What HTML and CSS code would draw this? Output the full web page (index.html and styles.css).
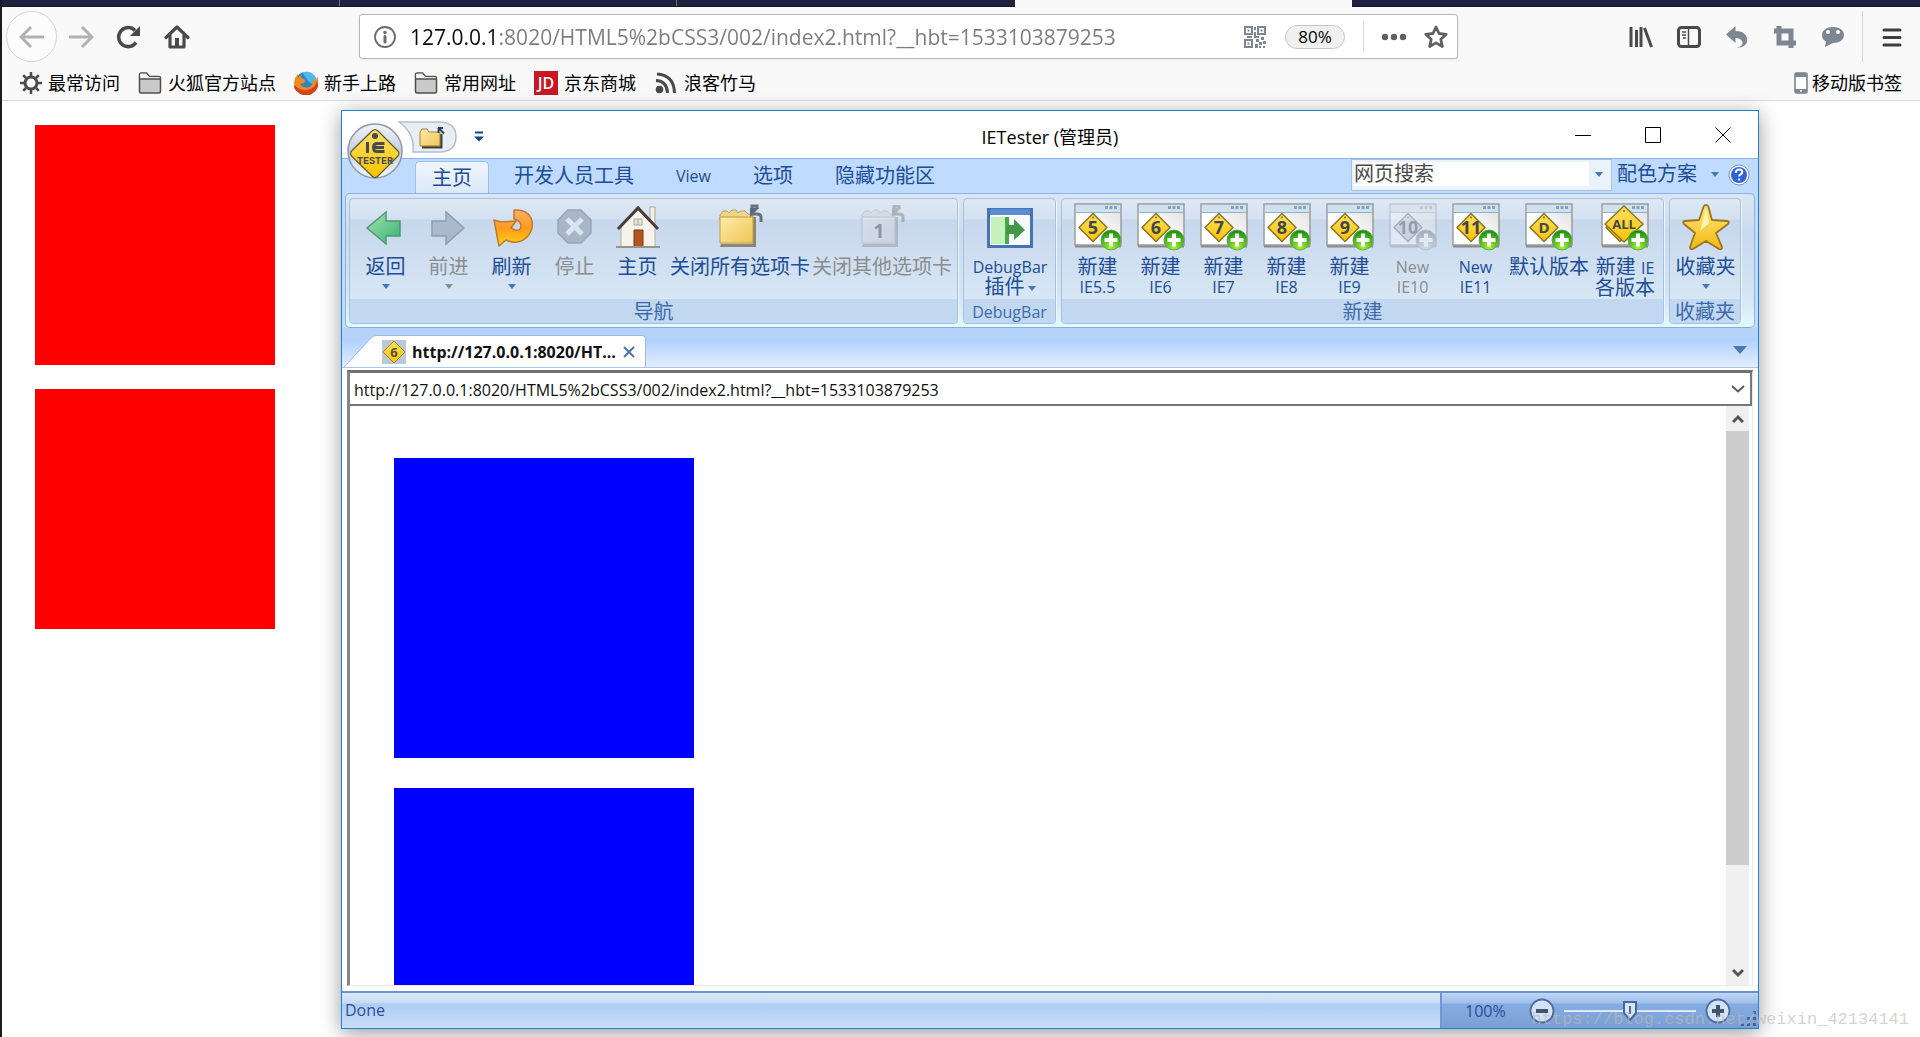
FILE: index.html
```html
<!DOCTYPE html>
<html lang="zh-CN">
<head>
  <meta charset="UTF-8">
  <meta name="viewport" content="width=device-width, initial-scale=1.0">
  <title>index2.html</title>
  <link rel="stylesheet" href="styles.css">
</head>
<body>
  <!-- shared icons -->
  <svg class="defs" width="0" height="0" aria-hidden="true">
    <defs>
      <linearGradient id="gold" x1="0" y1="0" x2="0" y2="1">
        <stop offset="0" stop-color="#ffe682"/><stop offset="1" stop-color="#f2b90d"/>
      </linearGradient>
      <linearGradient id="yellow" x1="0" y1="0" x2="0" y2="1">
        <stop offset="0" stop-color="#ffe066"/><stop offset="1" stop-color="#f9c300"/>
      </linearGradient>
      <linearGradient id="folderFill" x1="0" y1="0" x2="1" y2="1">
        <stop offset="0" stop-color="#fdebac"/><stop offset="1" stop-color="#eec552"/>
      </linearGradient>
      <linearGradient id="page" x1="1" y1="0" x2="0" y2="1">
        <stop offset="0" stop-color="#dcdcdc"/><stop offset="0.6" stop-color="#ffffff"/>
      </linearGradient>
      <linearGradient id="orange" x1="0" y1="0" x2="0" y2="1">
        <stop offset="0" stop-color="#f7b26a"/><stop offset="0.5" stop-color="#ff9a1c"/><stop offset="1" stop-color="#ffd21a"/>
      </linearGradient>
      <linearGradient id="green" x1="0" y1="0" x2="1" y2="1">
        <stop offset="0" stop-color="#a5e6b4"/><stop offset="1" stop-color="#35b06c"/>
      </linearGradient>
      <radialGradient id="plusFill" cx="0.5" cy="0.85" r="0.8">
        <stop offset="0" stop-color="#a6f52c"/><stop offset="1" stop-color="#169012"/>
      </radialGradient>
      <linearGradient id="orbFill" x1="0" y1="0" x2="0" y2="1">
        <stop offset="0" stop-color="#f3f6fa"/><stop offset="0.5" stop-color="#c5cedb"/><stop offset="1" stop-color="#f4f6f9"/>
      </linearGradient>
    </defs>
    <symbol id="folder" viewBox="0 0 24 22">
      <path d="M1.500 19.500V2.500Q1.500 1 3 1h5.500l3 3.500H21q1.500 0 1.500 1.500v13.500q0 1.500-1.500 1.500H3q-1.500 0-1.500-1.500z" fill="#c9c9c9" stroke="#4f4f4f" stroke-width="1.500"/>
      <path d="M2.200 6.500V1.800h6l3 3.500h10.500v1.200z" fill="#f4f4f4"/>
      <path d="M1.500 7h21" stroke="#4f4f4f" stroke-width="1.500"/>
    </symbol>
    <symbol id="ieWindow" viewBox="0 0 48 48">
      <path d="M1 1h46v41H1z" fill="url(#page)" stroke="#9a9c9e" stroke-width="1.500"/>
      <path d="M2 2h44v7H2z" fill="#cfe0ee"/>
      <path d="M1 9.500h46" stroke="#8fb3cf"/>
      <path d="M31 4.500h3m1.500 0h3m1.500 0h3" stroke="#7fa3c4" stroke-width="3"/>
      <path d="M1 43.500h46" stroke="#8a8a8a" stroke-width="2"/>
      <path d="M19 10.500 33 24.500 19 38.500 5 24.500z" fill="url(#yellow)" stroke="#8a7420" stroke-width="1.500" stroke-linejoin="round"/>
      <circle cx="19" cy="14.500" r="1" fill="#7b6820"/>
    </symbol>
    <symbol id="plus" viewBox="0 0 48 48">
      <circle cx="37" cy="37" r="10" fill="url(#plusFill)" stroke="#67a857"/>
      <path d="M37 30.500v13M30.500 37h13" stroke="#fff" stroke-width="4"/>
    </symbol>
    <symbol id="folders" viewBox="0 0 48 44">
      <path d="M5 39h32V12h3v30H4z" fill="#8d8674"/>
      <path d="M4 10l3-4h4l2 2 3-3h4l2 3 3-2h4l3 3 5 1v5H4z" fill="#f0d48c" stroke="#c2a35c"/>
      <path d="M4 12h33v26H4z" fill="url(#folderFill)" stroke="#c39b3f"/>
      <path d="M45 17v-5q0-3-4-3h-5V1h5v3" fill="none" stroke="#6b7075" stroke-width="3"/>
      <path d="M34 3h9l-9 9z" fill="#5d6a7c"/>
    </symbol>
  </svg>

  <div class="browser">
    <div class="tab-strip">
      <div class="tab"></div>
      <div class="tab"></div>
      <div class="tab"></div>
      <div class="tab active"></div>
    </div>

    <nav class="toolbar">
      <button class="back" aria-label="后退">
        <svg width="26" height="24" viewBox="0 0 26 24"><path d="M25 12H3M12 2 2 12l10 10" fill="none" stroke="#b1b1b1" stroke-width="3"/></svg>
      </button>
      <button class="tool" aria-label="前进">
        <svg width="26" height="24" viewBox="0 0 26 24"><path d="M1 12h22M14 2l10 10-10 10" fill="none" stroke="#b1b1b1" stroke-width="3"/></svg>
      </button>
      <button class="tool" aria-label="重新载入">
        <svg width="26" height="24" viewBox="0 0 26 24"><path d="M20 17.500A9.500 9.500 0 1 1 19 5.500" fill="none" stroke="#4a4a4a" stroke-width="3.500"/><path d="M24 1v10H14z" fill="#4a4a4a"/></svg>
      </button>
      <button class="tool" aria-label="主页">
        <svg width="26" height="26" viewBox="0 0 26 26"><path d="M2 13.500 13 3l11 10.500" fill="none" stroke="#4a4a4a" stroke-width="3.200" stroke-linecap="round" stroke-linejoin="round"/><path d="M6 11v12h14V11" fill="none" stroke="#4a4a4a" stroke-width="3.200" stroke-linejoin="round"/><path d="M11 14h4v10h-4z" fill="#4a4a4a"/></svg>
      </button>

      <div class="url-bar">
        <svg width="22" height="22" viewBox="0 0 22 22"><circle cx="11" cy="11" r="10" fill="none" stroke="#6b6b6b" stroke-width="1.800"/><circle cx="11" cy="6.500" r="1.700" fill="#6b6b6b"/><path d="M11 10.500v5.500" stroke="#6b6b6b" stroke-width="3" stroke-linecap="round"/></svg>
        <input class="url" type="text" aria-label="地址" value="127.0.0.1:8020/HTML5%2bCSS3/002/index2.html?__hbt=1533103879253">
        <button class="plain" aria-label="二维码">
          <svg width="22" height="22" viewBox="0 0 22 22" fill="#7d8794"><path fill-rule="evenodd" d="M0 0h9v9H0zM2 2v5h5V2zM13 0h9v9h-9zM15 2v5h5V2zM0 13h9v9H0zM2 15v5h5v-5z"/><path d="M3.500 3.500h2v2h-2zM16.500 3.500h2v2h-2zM3.500 16.500h2v2h-2zM10 1h2v3h-2zM10 6h2v4h3v2h-5zM3 10h5v2H3zM12 13h3v3h-3zM17 11h3v3h-3zM15 16h3v3h-3zM19 15h3v3h-3zM11 18h3v4h-3zM19 20h2v2h-2zM15 20h2v2h-2z"/></svg>
        </button>
        <button class="zoom-level">80%</button>
        <span class="url-divider"></span>
        <button class="plain" aria-label="页面操作">
          <svg width="26" height="8" viewBox="0 0 26 8" fill="#606060"><circle cx="4" cy="4" r="3.200"/><circle cx="13" cy="4" r="3.200"/><circle cx="22" cy="4" r="3.200"/></svg>
        </button>
        <button class="plain star" aria-label="加入书签">
          <svg width="24" height="24" viewBox="0 0 24 24"><path d="M12 2l3 6.500 7.200.8-5.400 4.900 1.500 7.300-6.300-3.600-6.300 3.600 1.500-7.300L1.800 9.300 9 8.500z" fill="none" stroke="#606060" stroke-width="2.800" stroke-linejoin="round"/></svg>
        </button>
      </div>

      <div class="actions">
        <button class="tool" aria-label="我的足迹">
          <svg width="24" height="22" viewBox="0 0 24 22" stroke="#4a4a4a" stroke-width="3"><path d="M2 1v20M7.500 4v17M12 1v20M15.500 2l7 19"/></svg>
        </button>
        <button class="tool" aria-label="侧栏">
          <svg width="24" height="22" viewBox="0 0 24 22"><rect x="1.500" y="1.500" width="21" height="19" rx="3" fill="none" stroke="#4a4a4a" stroke-width="3"/><path d="M11.500 2v18M5 6h4M5 9h4M6 12h3" stroke="#4a4a4a" stroke-width="1.500"/></svg>
        </button>
        <button class="tool" aria-label="撤销">
          <svg width="24" height="22" viewBox="0 0 24 22"><path d="M1 8.500 10.500 0v5C19 5 23 10 22 15.500 21 20 16 22 12 21.500c5-1 6.500-4 5-6.500-1.300-2-3.500-3-6.500-3v5z" fill="#7d8794"/></svg>
        </button>
        <button class="tool" aria-label="截图">
          <svg width="24" height="22" viewBox="0 0 24 22"><path d="M1 5h17v17M6 0v17h17" fill="none" stroke="#7d8794" stroke-width="5"/></svg>
        </button>
        <button class="tool" aria-label="消息">
          <svg width="24" height="22" viewBox="0 0 24 22"><path d="M12 1c6.500 0 11 3.500 11 8s-4.500 8-11 8L4 21l1-5.500C2 14 1 11.500 1 9c0-4.500 4.500-8 11-8z" fill="#7d8794"/><circle cx="7" cy="6" r="2" fill="#fff"/><circle cx="17" cy="6" r="2" fill="#fff"/></svg>
        </button>
        <span class="divider"></span>
        <button class="tool menu" aria-label="打开菜单">
          <svg width="20" height="20" viewBox="0 0 20 20"><path d="M2 3h16M2 10.500h16M2 18h16" stroke="#3e3e3e" stroke-width="3" stroke-linecap="round"/></svg>
        </button>
      </div>
    </nav>

    <div class="bookmarks">
      <a href="#"><svg width="22" height="22" viewBox="0 0 22 22"><circle cx="11" cy="11" r="6" fill="none" stroke="#4a4a4a" stroke-width="3"/><path d="M11 0v4M11 18v4M0 11h4M18 11h4M3.200 3.200 6 6M16 16l2.800 2.800M3.200 18.800 6 16M16 6l2.800-2.800" stroke="#4a4a4a" stroke-width="2.500"/></svg>最常访问</a>
      <a href="#"><svg width="24" height="22"><use href="#folder"/></svg>火狐官方站点</a>
      <a href="#"><svg width="24" height="24" viewBox="0 0 24 24"><circle cx="12" cy="12" r="11" fill="#2c83c6"/><path d="M8 1.500Q15-1 20 4t2 11l-7-4z" fill="#4db8ea"/><path d="M1 7l3-4v3l4-2-1 3 5 2-2 3-4 1q4 5 9 3t5-9l3 3V5q4 8-1 14t-12 5Q0 22 0 12z" fill="#ef8a1d"/><path d="M1 14q4 6 12 5t10-9q3 7-4 12t-14 0-4-8z" fill="#d8431f"/></svg>新手上路</a>
      <a href="#"><svg width="24" height="22"><use href="#folder"/></svg>常用网址</a>
      <a href="#"><span class="jd">JD</span>京东商城</a>
      <a href="#"><svg width="24" height="22" viewBox="0 0 24 22"><circle cx="5.500" cy="17.500" r="3.800" fill="#4a4a4a"/><path d="M2 8.500Q13 9 13.500 21M3 2Q20 3 20.500 21" fill="none" stroke="#4a4a4a" stroke-width="3"/></svg>浪客竹马</a>
      <a class="mobile" href="#"><svg width="14" height="22" viewBox="0 0 14 22"><rect x="1" y="1" width="12" height="20" rx="2" fill="#fff" stroke="#939ba5" stroke-width="2"/><path d="M1 1h12v4H1zM1 17h12v4H1z" fill="#7d8794"/><circle cx="7" cy="19" r="1" fill="#fff"/></svg>移动版书签</a>
    </div>

    <main class="page">
      <div class="red-box"></div>
      <div class="red-box"></div>
    </main>
  </div>

  <!-- IETester window -->
  <section class="window">
    <header class="title-bar">
      <div class="quick-access">
        <button aria-label="关闭选项卡">
          <svg width="60" height="32" viewBox="0 0 60 32"><path d="M1 1h42q15 1 15 15T43 31H15Q17 12 1 1z" fill="#e9eef4" stroke="#b3bfce" stroke-width="1.500"/><path d="M24 26h19V13" stroke="#41423f" stroke-width="3" fill="none"/><path d="M22 11l2-3h5l2 3h11v14H22z" fill="url(#folderFill)" stroke="#a5813b"/><path d="M40 7h5M40.500 7v5M41 7.500l5 5" stroke="#2a3c5e" stroke-width="1.800"/></svg>
        </button>
        <button aria-label="自定义">
          <svg width="10" height="12" viewBox="0 0 10 12"><path d="M1 1.500h8" stroke="#15428b" stroke-width="2"/><path d="M0 5.500h10l-5 5z" fill="#15428b"/></svg>
        </button>
      </div>
      <h1>IETester (管理员)</h1>
      <div class="window-buttons">
        <button aria-label="最小化"><svg width="16" height="16" viewBox="0 0 16 16"><path d="M0 8.500h16" stroke="#000"/></svg></button>
        <button aria-label="最大化"><svg width="16" height="16" viewBox="0 0 16 16"><path d="M.5.5h15v15H.5z" fill="none" stroke="#000"/></svg></button>
        <button aria-label="关闭"><svg width="16" height="16" viewBox="0 0 16 16"><path d="M.5.5l15 15M15.500.5l-15 15" stroke="#000"/></svg></button>
      </div>
    </header>

    <button class="orb" aria-label="IETester">
      <svg width="58" height="58" viewBox="0 0 58 58">
        <circle cx="29" cy="29" r="27" fill="url(#orbFill)" stroke="#8b98ad" stroke-width="1.500"/>
        <path d="M26 9q3-3 6 0L51.500 28.500q3 3 0 6L32 54q-3 3-6 0L6 34.500q-3-3 0-6z" fill="url(#yellow)" stroke="#5d5a3a" stroke-width="1.200"/>
        <path d="M26 14h6M29 11v6" stroke="#444c55" stroke-width="3.500"/>
        <path d="M21.500 20v11M38.500 21.500H31q-3.500 0-3.500 4t3.500 4h7.500M28 25.500h10" fill="none" stroke="#444c55" stroke-width="3"/>
        <text x="29" y="42" text-anchor="middle" class="orb-text">TESTER</text>
      </svg>
    </button>

    <div class="ribbon-tabs">
      <button class="ribbon-tab active">主页</button>
      <button class="ribbon-tab">开发人员工具</button>
      <button class="ribbon-tab latin">View</button>
      <button class="ribbon-tab">选项</button>
      <button class="ribbon-tab">隐藏功能区</button>
      <div class="ribbon-right">
        <div class="search">
          <input type="text" aria-label="网页搜索" value="网页搜索">
          <button aria-label="搜索选项"><span class="caret"></span></button>
        </div>
        <button class="scheme">配色方案<span class="caret"></span></button>
        <button class="help" aria-label="帮助">
          <svg width="22" height="22" viewBox="0 0 22 22"><circle cx="11" cy="11" r="10" fill="#fff" stroke="#7c8fb5"/><circle cx="11" cy="11" r="8" fill="#2c63d6"/><path d="M7.800 9q0-3.500 3.500-3.500 3 0 3 2.500 0 1.500-1.800 2.400-1.300.8-1.300 2.200" fill="none" stroke="#fff" stroke-width="2"/><path d="M10.200 14.500h2v2h-2z" fill="#fff"/></svg>
        </button>
      </div>
    </div>

    <div class="ribbon">
      <div class="group grow">
        <div class="items">
          <button class="item"><svg width="44" height="44" viewBox="0 0 44 44"><path d="M3 23 22 7v9h14v15H22v8z" fill="url(#green)" stroke="#4f9873" stroke-width="1.500"/></svg>返回<span class="caret"></span></button>
          <button class="item" disabled><svg width="44" height="44" viewBox="0 0 44 44"><path d="M37 23 19 7v9H5v15h14v8z" fill="#abb9cc" stroke="#8f9eb4" stroke-width="1.500"/></svg>前进<span class="caret"></span></button>
          <button class="item"><svg width="44" height="44" viewBox="0 0 44 44"><path d="M4 15l7 2 15-1-5 7 4 2q6 1 6-4t-7-7V5q13-1 17 8t-3 18q-9 10-22 4l-7 6z" fill="url(#orange)" stroke="#c07a28" stroke-width="1.500" stroke-linejoin="round"/></svg>刷新<span class="caret"></span></button>
          <button class="item" disabled><svg width="44" height="44" viewBox="0 0 44 44"><path d="M15 5h13l10 10v13l-10 10H15L5 28V15z" fill="#a9b6c8" stroke="#98a5b8" stroke-width="1.500"/><path d="M14 14l15 15M29 14 14 29" stroke="#dbe4ef" stroke-width="5"/></svg>停止</button>
          <button class="item"><svg width="44" height="44" viewBox="0 0 44 44"><path d="M34 2h5v18h-5z" fill="#f2eee2" stroke="#b0a999"/><path d="M5 22 22 5l17 17v20H5z" fill="#f6f3ea" stroke="#b5b0a4"/><path d="M18 25h9v17h-9z" fill="#b4541e" stroke="#753615"/><path d="M18 14h8v6h-8zM22 14v6" fill="#e5e3dd" stroke="#aaa79d"/><path d="M2 24 22 3l20 21" fill="none" stroke="#4a3c34" stroke-width="3"/><path d="M0 42h44" stroke="#989488" stroke-width="2"/></svg>主页</button>
          <button class="item wide"><svg width="48" height="44"><use href="#folders"/></svg>关闭所有选项卡</button>
          <button class="item wide" disabled><svg class="gray" width="48" height="44" viewBox="0 0 48 44"><use href="#folders"/><text x="21" y="33" text-anchor="middle" class="folder-text">1</text></svg>关闭其他选项卡</button>
        </div>
        <div class="caption">导航</div>
      </div>

      <div class="group">
        <div class="items">
          <button class="item debug"><svg width="46" height="44" viewBox="0 0 46 44"><path d="M1.500 4.500h43v37h-43z" fill="#f7fbff" stroke="#4773b5" stroke-width="3"/><path d="M3 4h40v6H3z" fill="#5c8bd0"/><path d="M4 12h14v27H4z" fill="#c5f2ba"/><path d="M18 12h4v27h-4z" fill="#4aa749"/><path d="M20 20h7v-6l11 11-11 10v-6h-7z" fill="#46964a"/></svg><span class="latin">DebugBar</span><span>插件<span class="caret inline"></span></span></button>
        </div>
        <div class="caption latin">DebugBar</div>
      </div>

      <div class="group grow">
        <div class="items">
          <button class="item"><svg width="48" height="48" viewBox="0 0 48 48"><use href="#ieWindow"/><text x="19" y="31" text-anchor="middle" class="ie-text">5</text><use href="#plus"/></svg>新建<span class="latin">IE5.5</span></button>
          <button class="item"><svg width="48" height="48" viewBox="0 0 48 48"><use href="#ieWindow"/><text x="19" y="31" text-anchor="middle" class="ie-text">6</text><use href="#plus"/></svg>新建<span class="latin">IE6</span></button>
          <button class="item"><svg width="48" height="48" viewBox="0 0 48 48"><use href="#ieWindow"/><text x="19" y="31" text-anchor="middle" class="ie-text">7</text><use href="#plus"/></svg>新建<span class="latin">IE7</span></button>
          <button class="item"><svg width="48" height="48" viewBox="0 0 48 48"><use href="#ieWindow"/><text x="19" y="31" text-anchor="middle" class="ie-text">8</text><use href="#plus"/></svg>新建<span class="latin">IE8</span></button>
          <button class="item"><svg width="48" height="48" viewBox="0 0 48 48"><use href="#ieWindow"/><text x="19" y="31" text-anchor="middle" class="ie-text">9</text><use href="#plus"/></svg>新建<span class="latin">IE9</span></button>
          <button class="item" disabled><svg class="gray" width="48" height="48" viewBox="0 0 48 48"><use href="#ieWindow"/><text x="19" y="31" text-anchor="middle" class="ie-text">10</text><use href="#plus"/></svg><span class="latin">New</span><span class="latin">IE10</span></button>
          <button class="item"><svg width="48" height="48" viewBox="0 0 48 48"><use href="#ieWindow"/><text x="19" y="31" text-anchor="middle" class="ie-text">11</text><use href="#plus"/></svg><span class="latin">New</span><span class="latin">IE11</span></button>
          <button class="item mid"><svg width="48" height="48" viewBox="0 0 48 48"><use href="#ieWindow"/><text x="19" y="30" text-anchor="middle" class="ie-text small">D</text><use href="#plus"/></svg>默认版本</button>
          <button class="item all"><svg width="48" height="48" viewBox="0 0 48 48"><use href="#ieWindow"/><path d="M23 3 42 21 23 39 4 21z" fill="url(#yellow)" stroke="#8a7420" stroke-width="1.500" stroke-linejoin="round"/><circle cx="23" cy="8" r="1" fill="#7b6820"/><text x="23" y="26" text-anchor="middle" class="ie-text all-text">ALL</text><use href="#plus"/></svg><span>新建 <span class="latin">IE</span></span><span>各版本</span></button>
        </div>
        <div class="caption">新建</div>
      </div>

      <div class="group">
        <div class="items">
          <button class="item"><svg width="48" height="48" viewBox="0 0 48 48"><path d="M24 2q2 0 2.500 2L30 17l15 1q3 .5 1 3L34 30l6 14q0 3-3 2l-13-8-13 8q-3 1-3-2l5-14L2 21q-2-2.500 1-3l14-1 4.500-13Q22 2 24 2z" fill="url(#gold)" stroke="#9a7420" stroke-width="1.800" stroke-linejoin="round"/><path d="M24 6l3 14-9 8 3-10z" fill="#fff4b5"/></svg>收藏夹<span class="caret"></span></button>
        </div>
        <div class="caption">收藏夹</div>
      </div>
    </div>

    <div class="doc-tabs">
      <svg width="36" height="32" viewBox="0 0 36 32"><path d="M0 32 28 2q2-2 5-2h3v32z" fill="#fff"/><path d="M0 32 28 2q2-1.500 5-1.500h3" fill="none" stroke="#9abbe6"/></svg>
      <div class="doc-tab">
        <svg width="24" height="24" viewBox="0 0 24 24"><path d="M0 0h24v24H0z" fill="#bdc9d2"/><path d="M12 1l11 11-11 11L1 12z" fill="url(#yellow)" stroke="#9a812b"/><text x="12" y="17" text-anchor="middle" class="tab-icon-text">6</text></svg>
        <span>http://127.0.0.1:8020/HT...</span>
        <button aria-label="关闭选项卡"><svg width="14" height="12" viewBox="0 0 14 12"><path d="M2 1l10 10M12 1 2 11" stroke="#4a72ac" stroke-width="2"/></svg></button>
      </div>
      <button class="doc-list" aria-label="选项卡列表"><svg width="14" height="8" viewBox="0 0 14 8"><path d="M0 0h14L7 8z" fill="#4a78b5"/></svg></button>
    </div>

    <div class="document">
      <div class="frame">
        <div class="address">
          <input type="text" aria-label="IE 地址" value="http://127.0.0.1:8020/HTML5%2bCSS3/002/index2.html?__hbt=1533103879253">
          <button aria-label="展开地址"><svg width="14" height="10" viewBox="0 0 14 10"><path d="M1 2l6 5.500L13 2" fill="none" stroke="#555" stroke-width="1.800"/></svg></button>
        </div>
        <div class="view">
          <div class="view-content">
            <div class="blue-box"></div>
            <div class="blue-box"></div>
          </div>
          <div class="scrollbar">
            <button aria-label="向上"><svg width="12" height="10" viewBox="0 0 12 10"><path d="M1 8l5-5 5 5" fill="none" stroke="#555" stroke-width="3"/></svg></button>
            <div class="track"><div class="thumb"></div></div>
            <button aria-label="向下"><svg width="12" height="10" viewBox="0 0 12 10"><path d="M1 2l5 5 5-5" fill="none" stroke="#555" stroke-width="3"/></svg></button>
          </div>
        </div>
      </div>
    </div>

    <footer class="status">
      <div class="message">Done</div>
      <div class="zoom">
        <label for="zoomRange">100%</label>
        <button aria-label="缩小"><svg width="26" height="26" viewBox="0 0 26 26"><circle cx="13" cy="13" r="11.500" fill="#d3e2f6" stroke="#4c6c9e" stroke-width="1.800"/><path d="M7 13h12" stroke="#44536a" stroke-width="4"/></svg></button>
        <input type="range" id="zoomRange" min="0" max="200" value="100">
        <button aria-label="放大"><svg width="26" height="26" viewBox="0 0 26 26"><circle cx="13" cy="13" r="11.500" fill="#d3e2f6" stroke="#4c6c9e" stroke-width="1.800"/><path d="M7 13h12M13 7v12" stroke="#44536a" stroke-width="4"/></svg></button>
        <svg class="grip" width="18" height="18" viewBox="0 0 18 18" fill="#43649d"><path d="M13 1h3v3h-3zM7 7h3v3H7zM13 7h3v3h-3zM1 13h3v3H1zM7 13h3v3H7zM13 13h3v3h-3z"/></svg>
      </div>
    </footer>
  </section>

  <div class="watermark">https://blog.csdn.net/weixin_42134141</div>
</body>
</html>
```

FILE: styles.css
```css
* {
  box-sizing: border-box;
}
body {
  margin: 0;
  height: 100vh;
  overflow: hidden;
  position: relative;
  background: #fff;
  font-family: "Open Sans", "Noto Sans CJK SC", sans-serif;
  color: #000;
}
button {
  display: flex;
  align-items: center;
  justify-content: center;
  padding: 0;
  border: none;
  background: none;
  font: inherit;
  color: inherit;
}
input {
  padding: 0;
  border: none;
  outline: none;
  background: none;
  font: inherit;
  color: inherit;
  min-width: 0;
}
svg {
  display: block;
  flex: none;
}
.defs {
  position: absolute;
}

/* Firefox */
.browser {
  height: 100%;
  border-left: 2px solid #1b1b1f;
}
.tab-strip {
  display: flex;
  height: 7px;
  background: #202340;
  border-bottom: 1px solid #15172c;
}
.tab {
  width: 17.6%;
  border-right: 1px solid #6b6d80;
}
.tab:nth-child(3) {
  border-right: none;
}
.tab.active {
  height: 7px;
  background: #f9f9fa;
  border: none;
}
.toolbar {
  display: flex;
  align-items: center;
  height: 59px;
  padding: 0 5px 0 4px;
  background: #f9f9fa;
}
.back {
  width: 51px;
  height: 51px;
  border: 1px solid #d3d3d3;
  border-radius: 50%;
  background: #fcfcfc;
}
.tool {
  width: 48px;
  height: 40px;
}
.url-bar {
  display: flex;
  align-items: center;
  flex: 1;
  height: 45px;
  margin-left: 158px;
  padding: 0 9px 0 14px;
  background: #fff;
  border: 1px solid #b8b8b8;
  border-radius: 3px;
  box-shadow: 0 1px 4px rgba(0, 0, 0, 0.06);
}
.url {
  flex: 1;
  height: 40px;
  margin-left: 14px;
  font-size: 21px;
  background: linear-gradient(to right, #0c0c0d 90px, #7c7c7c 90px);
  -webkit-background-clip: text;
  background-clip: text;
  color: transparent;
}
.zoom-level {
  width: 60px;
  height: 24px;
  margin: 0 18px 0 19px;
  border: 1px solid #c8c8c8;
  border-radius: 12px;
  background: #f0f0f0;
  font-size: 17px;
}
.url-divider {
  width: 1px;
  height: 31px;
  margin-right: 17px;
  background: #d7d7db;
}
.star {
  margin-left: 17px;
}
.actions {
  display: flex;
  align-items: center;
  margin-left: 159px;
}
.divider {
  width: 1px;
  height: 51px;
  margin-left: 5px;
  background: #d7d7db;
}
.menu {
  width: 46px;
  margin-left: 6px;
}
.bookmarks {
  display: flex;
  align-items: center;
  gap: 18px;
  height: 35px;
  padding: 0 18px;
  background: #f9f9fa;
  border-bottom: 1px solid #d9d9d9;
}
.bookmarks a {
  display: flex;
  align-items: center;
  gap: 6px;
  font-size: 18px;
  line-height: 24px;
  color: #000;
  text-decoration: none;
  white-space: nowrap;
}
.jd {
  width: 24px;
  height: 24px;
  background: #c81623;
  color: #fff;
  font-size: 16px;
  font-weight: 600;
  text-align: center;
}
.bookmarks .mobile {
  gap: 4px;
  margin-left: auto;
}
.page {
  display: flex;
  flex-direction: column;
  gap: 24px;
  padding: 24px 33px;
}
.red-box {
  width: 240px;
  height: 240px;
  background: #f00;
}

/* IETester */
.window {
  position: absolute;
  top: 110px;
  right: 161px;
  bottom: 8px;
  left: 341px;
  display: flex;
  flex-direction: column;
  background: #bfdbff;
  border: 1px solid #1883d7;
  box-shadow: 0 4px 20px rgba(0, 0, 0, 0.4);
  color: #204d96;
  font-size: 20px;
  line-height: 20px;
}
.latin {
  font-size: 16px;
}
.title-bar {
  display: grid;
  grid-template-columns: 1fr auto 1fr;
  align-items: center;
  height: 47px;
  background: #fff;
}
.title-bar h1 {
  margin: 0;
  padding-top: 4px;
  font-size: 18px;
  font-weight: normal;
  color: #000;
}
.quick-access {
  display: flex;
  align-items: center;
  gap: 16px;
  padding: 4px 0 0 56px;
}
.window-buttons {
  display: flex;
  justify-content: flex-end;
}
.window-buttons button {
  width: 70px;
  height: 47px;
}
.orb {
  position: absolute;
  top: 11px;
  left: 4px;
  z-index: 1;
}
.orb-text {
  font: bold 10px "Liberation Mono", monospace;
  fill: #444c55;
}
.ribbon-tabs {
  display: flex;
  align-items: stretch;
  height: 35px;
  padding-left: 73px;
  border-top: 1px solid #8db2e3;
}
.ribbon-tab {
  padding: 0 21px;
  white-space: nowrap;
}
.ribbon-tab.active {
  padding: 0 16px;
  margin: 2px 4px 0 0;
  background: linear-gradient(#f0f6ff, #dbe8f7);
  border: 1px solid #8ec4ee;
  border-bottom: none;
  border-radius: 5px 5px 0 0;
}
.ribbon-right {
  display: flex;
  align-items: flex-start;
  margin-left: auto;
  padding-right: 8px;
}
.search {
  display: flex;
  align-items: flex-start;
  width: 261px;
  height: 32px;
  padding: 2px;
  background: #eaf2fb;
  border: 1px solid #abc1de;
}
.search input {
  flex: 1;
  height: 24px;
  padding-bottom: 4px;
  background: #fff;
  color: #4a4a4a;
}
.search button {
  width: 20px;
  height: 24px;
}
.scheme {
  gap: 14px;
  height: 30px;
  padding: 0 9px 0 5px;
}
.help {
  height: 32px;
}
.caret {
  width: 0;
  height: 0;
  border: 4px solid transparent;
  border-top: 5px solid #4676b4;
  border-bottom: none;
}
.caret.inline {
  display: inline-block;
  margin-left: 3px;
  vertical-align: middle;
}
.ribbon {
  display: flex;
  gap: 5px;
  height: 135px;
  margin: 0 3px;
  padding: 4px 13px 3px 3px;
  background: linear-gradient(#dbe6f4, #c9daee 30%, #d6e6f5 80%, #e0fbff);
  border: 1px solid #8db4e6;
  border-bottom-color: #83aee0;
  border-radius: 5px;
}
.group {
  display: flex;
  flex-direction: column;
  border: 1px solid #a3c2e0;
  border-radius: 4px;
  background: linear-gradient(#dfe9f5, #d3e0f0 20px, #c7d7ec 21px, #d8e7f5 102px);
  box-shadow: 1px 1px 0 #eef6fd;
  overflow: hidden;
}
.items {
  display: flex;
  flex: 1;
  padding: 4px 3px 0 4px;
}
.group.grow {
  flex: 1 1 auto;
}
.caption {
  height: 24px;
  line-height: 26px;
  text-align: center;
  background: #c1d8f0;
  color: #3e6aaa;
}
.item {
  flex-direction: column;
  justify-content: flex-start;
  width: 63px;
  white-space: nowrap;
}
.item svg {
  height: 48px;
  margin-bottom: 6px;
}
.item .caret {
  margin-top: 7px;
}
.item .caret.inline {
  margin-top: 0;
}
.item:disabled {
  color: #8d8d8d;
}
.item:disabled .caret {
  border-top-color: #8d8d8d;
}
.item.wide {
  width: 142px;
}
.item.debug {
  width: 84px;
}
.item.mid {
  width: 84px;
}
.item.all {
  width: 68px;
}
.gray {
  filter: grayscale(1);
  opacity: 0.4;
}
.ie-text {
  font: bold 18px "Open Sans", sans-serif;
  fill: #40484c;
}
.ie-text.small {
  font-size: 15px;
}
.ie-text.all-text {
  font-size: 13px;
}
.folder-text {
  font: bold 20px "Open Sans", sans-serif;
  fill: #333;
}
.tab-icon-text {
  font: bold 13px "Open Sans", sans-serif;
  fill: #54501f;
}
.doc-tabs {
  display: flex;
  align-items: flex-end;
  height: 40px;
  padding-left: 2px;
  background: linear-gradient(#b5d2f8 10px, #b0d0ff 11px, #e3eeff);
  border-bottom: 1px solid #a7c6ee;
}
.doc-tab {
  display: flex;
  align-items: center;
  height: 32px;
  padding: 0 9px 0 2px;
  background: #fff;
  border-top: 1px solid #9abbe6;
  border-right: 1px solid #9abbe6;
  border-radius: 0 4px 0 0;
  font-size: 16px;
  font-weight: bold;
  color: #111;
}
.doc-tab span {
  margin: 0 6px;
}
.doc-list {
  height: 34px;
  margin-left: auto;
  padding-right: 11px;
}
.document {
  display: flex;
  flex: 1;
  min-height: 0;
  padding: 2px 5px 5px;
  background: #fff;
}
.frame {
  display: flex;
  flex: 1;
  flex-direction: column;
  border: 1px solid #e9e9e9;
  border-top: 3px solid #707070;
  border-left: 3px solid #858585;
}
.address {
  display: flex;
  height: 33px;
  padding-left: 4px;
  border: 1px solid #777;
  border-width: 0 2px 2px 0;
  color: #111;
  font-size: 16px;
}
.address input {
  flex: 1;
  padding-top: 2px;
}
.address button {
  width: 24px;
}
.view {
  display: flex;
  flex: 1;
  min-height: 0;
}
.view-content {
  flex: 1;
  padding: 52px 44px;
  overflow: hidden;
}
.blue-box {
  width: 300px;
  height: 300px;
  margin-bottom: 30px;
  background: #00f;
}
.scrollbar {
  display: flex;
  flex-direction: column;
  width: 23px;
  margin-right: 3px;
  background: #f0f0f0;
}
.scrollbar button {
  height: 25px;
}
.track {
  flex: 1;
}
.thumb {
  height: 82%;
  background: #cdcdcd;
}
.status {
  display: flex;
  height: 37px;
  border-top: 2px solid #6a95cb;
  font-size: 16px;
}
.message {
  flex: 1;
  padding: 7px 3px;
  background: linear-gradient(#dbe8fa, #c5dbf6 10px, #adcdf3 11px, #cbddf6);
  border-right: 2px solid #6f98d0;
  color: #2c4fa0;
}
.zoom {
  display: flex;
  align-items: center;
  width: 316px;
  padding-left: 23px;
  background: linear-gradient(#c0d6f5, #9fc0ec 10px, #85ace2 11px, #7a9fd5);
}
.zoom label {
  width: 64px;
  color: #2c4fa0;
}
.zoom input {
  flex: 1;
  margin: 0 9px;
  height: 24px;
  appearance: none;
  background: linear-gradient(#dfe9f6, #dfe9f6) center / 100% 2px no-repeat;
}
.zoom input::-webkit-slider-thumb {
  appearance: none;
  width: 14px;
  height: 20px;
  background: url("data:image/svg+xml,%3Csvg xmlns='http://www.w3.org/2000/svg' width='14' height='20'%3E%3Cpath d='M1 1h12v11l-6 7-6-7z' fill='%23d6e5f8' stroke='%2346689c' stroke-width='2'/%3E%3Cpath d='M7 5v8' stroke='%234c6c9e' stroke-width='2'/%3E%3C/svg%3E") no-repeat;
}
.grip {
  align-self: flex-end;
  margin-left: 9px;
}
.watermark {
  position: absolute;
  right: 11px;
  bottom: 8px;
  font: 17px "Liberation Mono", monospace;
  color: rgba(185, 188, 178, 0.65);
}
```
